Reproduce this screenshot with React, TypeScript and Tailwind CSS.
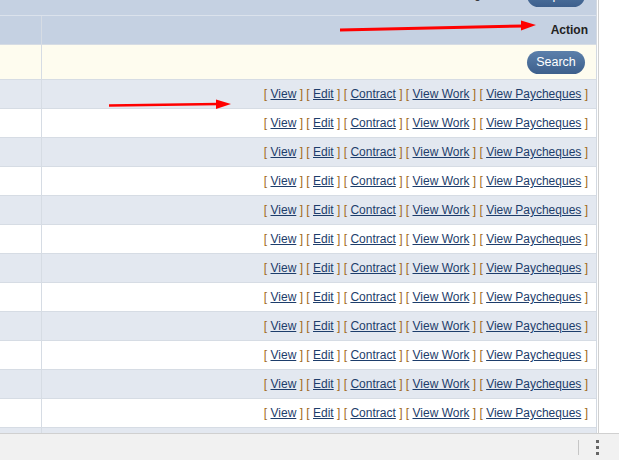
import React from "react";

const font = { fontFamily: '"Liberation Sans", Arial, sans-serif' };

const links = ["View", "Edit", "Contract", "View Work", "View Paycheques"];

const ActionLinks = () => (
  <span className="whitespace-nowrap text-[12px] text-[#a0691a]">
    {links.map((l, i) => (
      <span key={l}>
        {i > 0 && " "}[{" "}
        <a href="#" className="text-[#1d3d6b] underline">
          {l}
        </a>{" "}
        ]
      </span>
    ))}
  </span>
);

const Row = ({ shaded }: { shaded: boolean }) => (
  <div
    className={`flex h-[29px] shrink-0 border-b border-[#d6dce4] ${
      shaded ? "bg-[#e3e8f0]" : "bg-white"
    }`}
  >
    <div className="w-[42px] shrink-0 border-r border-[#d6dce4]" />
    <div className="flex flex-1 items-center justify-end pr-[8px]">
      <ActionLinks />
    </div>
  </div>
);

const PillButton = ({ label, className }: { label: string; className?: string }) => (
  <button
    className={`h-[23px] w-[58px] rounded-full bg-gradient-to-b from-[#5c80ab] to-[#3d5f8c] text-[12.5px] text-white ${className ?? ""}`}
  >
    {label}
  </button>
);

export default function App() {
  const rows = Array.from({ length: 13 }, (_, i) => i % 2 === 0);

  return (
    <div className="relative flex h-[460px] w-[619px] flex-col overflow-hidden bg-white" style={font}>
      <div className="flex flex-1 overflow-hidden">
        {/* table */}
        <div className="flex w-[597px] shrink-0 flex-col overflow-hidden border-r border-[#d3d9e1]">
          <div className="flex h-[16px] shrink-0 items-end justify-end overflow-hidden border-b border-[#dbe2ec] bg-[#c5d1e2] pr-[11px]">
            <span className="mb-[15px] mr-[46px] text-[12px] leading-[12px] text-[#222]">Showing</span>
            <PillButton label="Export" className="mb-[8px] shrink-0" />
          </div>
          <div className="flex h-[29px] shrink-0 border-b border-[#d6dce4] bg-[#c5d1e2]">
            <div className="w-[42px] shrink-0 border-r border-[#d6dce4]" />
            <div className="flex flex-1 items-center justify-end pr-[8px] text-[12px] font-bold text-[#222]">
              Action
            </div>
          </div>
          <div className="flex h-[35px] shrink-0 border-b border-[#d6dce4] bg-[#fefcef]">
            <div className="w-[42px] shrink-0 border-r border-[#d6dce4]" />
            <div className="flex flex-1 items-center justify-end pr-[11px]">
              <PillButton label="Search" />
            </div>
          </div>
          {rows.map((s, i) => (
            <Row key={i} shaded={s} />
          ))}
        </div>
        <div className="w-[1px] shrink-0 bg-white" />
        <div className="w-[1px] shrink-0 bg-[#d0d0d0]" />
        <div className="flex-1 bg-white" />
      </div>

      {/* bottom bar */}
      <div className="flex h-[27px] shrink-0 items-center justify-end border-t border-[#d0d0d0] bg-[#f1f1f1] pr-[20px]">
        <div className="mr-[17px] h-[15px] w-[1px] bg-[#c6c6c6]" />
        <div className="flex flex-col gap-[3px]">
          <span className="h-[3px] w-[3px] bg-[#666]" />
          <span className="h-[3px] w-[3px] bg-[#666]" />
          <span className="h-[3px] w-[3px] bg-[#666]" />
        </div>
      </div>

      {/* annotation arrows */}
      <svg className="pointer-events-none absolute left-0 top-0" width="619" height="460">
        <line x1="340" y1="30" x2="524" y2="26" stroke="#ff0000" strokeWidth="3" />
        <polygon points="521,20.5 536,25 521,30.5" fill="#ff0000" />
        <line x1="109" y1="105.5" x2="219" y2="104" stroke="#ff0000" strokeWidth="2.5" />
        <polygon points="216,99.5 231,104 216,109" fill="#ff0000" />
      </svg>
    </div>
  );
}
